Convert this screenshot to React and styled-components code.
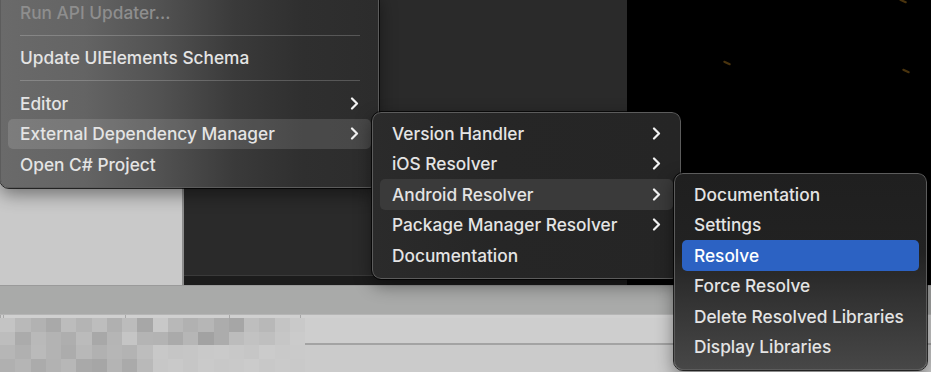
import React from "react";
import styled, { createGlobalStyle } from "styled-components";

const GlobalStyle = createGlobalStyle`
  html, body {
    margin: 0;
    padding: 0;
    background: #000;
  }
  body {
    font-family: "Inter", "Noto Sans", "Liberation Sans", sans-serif;
    -webkit-font-smoothing: antialiased;
  }
`;

const Screen = styled.div`
  position: relative;
  width: 931px;
  height: 372px;
  overflow: hidden;
  display: grid;
  grid-template-rows: 285px 29px 4px 1fr;
  background: #000;
`;

const TopArea = styled.div`
  display: grid;
  grid-template-columns: 182px 2px 443px 1fr;
`;

const LightPane = styled.div`
  background: #c9c9c9;
`;

const Divider = styled.div`
  background: #8d8d8d;
`;

const DarkPane = styled.div`
  background: #2a2a2a;
  border-bottom: 9px solid #1c1c1c;
  box-shadow: inset 0 -1px 0 #3a3a3a;
`;

const Viewport = styled.div`
  background: #000;
  border-bottom: 2px solid #000;
  position: relative;
`;

const Speck = styled.span`
  position: absolute;
  width: 8px;
  height: 2px;
  border-radius: 2px;
  background: #6a4a14;
  opacity: 0.7;
  transform: rotate(25deg);
`;

const GrayBand = styled.div`
  background: #a9aaa9;
  border-top: 1px solid #9a9a9a;
`;

const TabStrip = styled.div`
  display: flex;
  background: #cdcdcd;
  border-top: 1px solid #b5b5b5;
`;

const Tab = styled.div`
  width: ${(p) => p.$w}px;
  border-left: 1px solid #a8a8a8;
  background: #d0d0d0;
`;

const Bottom = styled.div`
  display: flex;
  background: #cbcbcb;
`;

const Mosaic = styled.div`
  width: 305px;
  display: grid;
  grid-template-columns: repeat(20, 1fr);
  grid-auto-rows: 1fr;
`;

const Cell = styled.div`
  background: ${(p) => p.$c};
`;

const BottomRest = styled.div`
  flex: 1;
  display: flex;
  flex-direction: column;
`;

const BottomRow = styled.div`
  height: 25px;
  border-bottom: 2px solid #a3a3a3;
  background: #cecece;
`;

const Menu = styled.div`
  position: absolute;
  left: ${(p) => p.$x}px;
  top: ${(p) => p.$y}px;
  width: ${(p) => p.$w}px;
  box-sizing: border-box;
  padding: 5px 7px 7px;
  border-radius: 9px;
  border: 1px solid #5c5c5c;
  outline: 1px solid rgba(0, 0, 0, 0.75);
  box-shadow: 0 6px 18px rgba(0, 0, 0, 0.45);
  background: ${(p) => p.$bg};
`;

const Item = styled.div`
  height: 30.5px;
  display: flex;
  align-items: center;
  justify-content: space-between;
  padding: 0 12px 0 12px;
  border-radius: 5px;
  font-size: 17.3px;
  font-weight: 500;
  color: ${(p) => (p.$disabled ? "#8e8e8e" : p.$active === "blue" ? "#ffffff" : "#e4e4e4")};
  background: ${(p) =>
    p.$active === "blue"
      ? "#2c62c3"
      : p.$active === "soft"
      ? "rgba(255,255,255,0.13)"
      : p.$active === "dim"
      ? "#3a3a3a"
      : "transparent"};
  white-space: nowrap;
`;

const Separator = styled.div`
  height: 15px;
  display: flex;
  align-items: center;
  padding: 0 11px 0 12px;
  &::after {
    content: "";
    flex: 1;
    height: 1px;
    background: rgba(255, 255, 255, 0.2);
  }
`;

const Chevron = () => (
  <svg width="9" height="13" viewBox="0 0 9 13" fill="none">
    <polyline
      points="2,1.5 7,6.5 2,11.5"
      stroke="#f2f2f2"
      strokeWidth="2.2"
      strokeLinecap="round"
      strokeLinejoin="round"
    />
  </svg>
);

const mainMenu = [
  { label: "Run API Updater...", disabled: true },
  { sep: true },
  { label: "Update UIElements Schema" },
  { sep: true },
  { label: "Editor", sub: true },
  { label: "External Dependency Manager", sub: true, active: "soft" },
  { label: "Open C# Project" },
];

const edmMenu = [
  { label: "Version Handler", sub: true },
  { label: "iOS Resolver", sub: true },
  { label: "Android Resolver", sub: true, active: "dim" },
  { label: "Package Manager Resolver", sub: true },
  { label: "Documentation" },
];

const androidMenu = [
  { label: "Documentation" },
  { label: "Settings" },
  { label: "Resolve", active: "blue" },
  { label: "Force Resolve" },
  { label: "Delete Resolved Libraries" },
  { label: "Display Libraries" },
];

const mosaicShades = [
  "#c4c4c4", "#b9b9b9", "#b2b2b2", "#a9a9a9", "#bcbcbc", "#b4b4b4", "#bdbdbd", "#b0b0b0", "#bcbcbc", "#a7a7a7",
  "#c8c8c8", "#b8b8b8", "#b1b1b1", "#b6b6b6", "#acacac", "#a6a6a6", "#bebebe", "#b8b8b8", "#c4c4c4", "#c9c9c9",
  "#bdbdbd", "#ababab", "#b9b9b9", "#b3b3b3", "#aeaeae", "#bbbbbb", "#a8a8a8", "#b5b5b5", "#c5c5c5", "#b4b4b4",
  "#b3b3b3", "#aaaaaa", "#b6b6b6", "#a2a2a2", "#acacac", "#bcbcbc", "#c2c2c2", "#bfbfbf", "#c6c6c6", "#cbcbcb",
  "#b6b6b6", "#b0b0b0", "#bababa", "#b3b3b3", "#acacac", "#b8b8b8", "#b1b1b1", "#b6b6b6", "#b3b3b3", "#bdbdbd",
  "#c8c8c8", "#c5c5c5", "#c6c6c6", "#c9c9c9", "#cacaca", "#c8c8c8", "#c6c6c6", "#cbcbcb", "#c9c9c9", "#cacaca",
  "#b0b0b0", "#b5b5b5", "#ababab", "#b2b2b2", "#b7b7b7", "#a9a9a9", "#a6a6a6", "#b4b4b4", "#aaaaaa", "#b9b9b9",
  "#c7c7c7", "#c9c9c9", "#c6c6c6", "#cacaca", "#c8c8c8", "#c9c9c9", "#cbcbcb", "#c8c8c8", "#cacaca", "#c9c9c9",
];

const MenuList = ({ items }) =>
  items.map((it, i) =>
    it.sep ? (
      <Separator key={i} />
    ) : (
      <Item key={i} $disabled={it.disabled} $active={it.active}>
        <span>{it.label}</span>
        {it.sub && <Chevron />}
      </Item>
    )
  );

const App = () => {
  return (
    <>
      <GlobalStyle />
      <Screen>
        <TopArea>
          <LightPane />
          <Divider />
          <DarkPane />
          <Viewport>
            <Speck style={{ left: 96, top: 62 }} />
            <Speck style={{ left: 275, top: 70 }} />
            <Speck style={{ left: 272, top: 0 }} />
          </Viewport>
        </TopArea>
        <GrayBand />
        <TabStrip>
          <Tab $w={2} />
          <Tab $w={121} />
          <Tab $w={103} />
          <Tab $w={70} />
          <Tab $w={634} />
        </TabStrip>
        <Bottom>
          <Mosaic>
            {mosaicShades.map((c, i) => (
              <Cell key={i} $c={c} />
            ))}
          </Mosaic>
          <BottomRest>
            <BottomRow />
          </BottomRest>
        </Bottom>

        <Menu
          $x={0}
          $y={-9}
          $w={379}
          $bg="linear-gradient(90deg, #6a6a6a 0%, #646464 22%, #525252 42%, #3a3a3a 62%, #2f2f2f 80%, #2c2c2c 100%)"
        >
          <MenuList items={mainMenu} />
        </Menu>
        <Menu
          $x={372}
          $y={112}
          $w={309}
          $bg="linear-gradient(90deg, #2b2b2b 0%, #262626 40%, #252525 100%)"
        >
          <MenuList items={edmMenu} />
        </Menu>
        <Menu
          $x={674}
          $y={173}
          $w={253}
          $bg="linear-gradient(180deg, #1f1f1f 0%, #222222 40%, #333333 65%, #474747 100%)"
        >
          <MenuList items={androidMenu} />
        </Menu>
      </Screen>
    </>
  );
};

export default App;
